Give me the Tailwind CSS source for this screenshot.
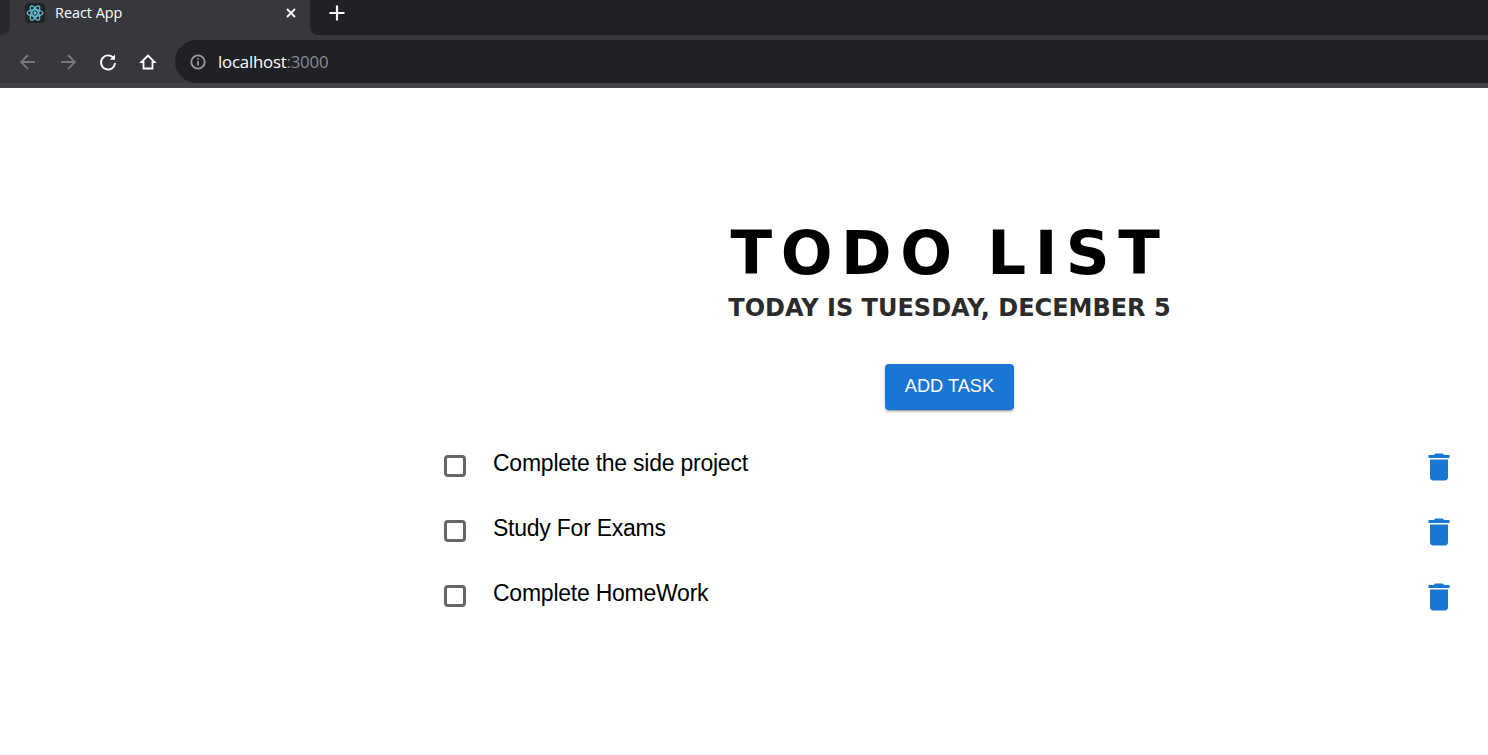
<!DOCTYPE html>
<html>
<head>
<meta charset="utf-8">
<script src="https://cdn.jsdelivr.net/npm/@tailwindcss/browser@4"></script>
</head>
<body class="bg-white h-[755px] overflow-hidden font-['Liberation_Sans',sans-serif]">
<div class="h-[88px] bg-[#37383d] flex flex-col">
  <div class="h-[35px] flex items-stretch">
    <div class="w-[10px] bg-[#28292d] rounded-br-lg"></div>
    <div class="w-[300px] flex items-center pb-[9px] pl-[15px] pr-[13px] text-white">
      <div class="w-5 h-5 bg-[#222327] rounded-sm flex items-center justify-center mr-[10px]">
        <svg viewBox="0 0 24 24" class="w-5 h-5" fill="none" stroke="#61c6df" stroke-width="1.5"><ellipse cx="12" cy="12" rx="9.5" ry="3.8"/><ellipse cx="12" cy="12" rx="9.5" ry="3.8" transform="rotate(60 12 12)"/><ellipse cx="12" cy="12" rx="9.5" ry="3.8" transform="rotate(120 12 12)"/><circle cx="12" cy="12" r="2" fill="#61c6df" stroke="none"/></svg>
      </div>
      <span class="text-[14.4px] font-['Open_Sans',sans-serif] flex-1">React App</span>
      <svg viewBox="0 0 12 12" class="w-3 h-3 -ml-px" stroke="#fff" stroke-width="1.8"><path d="M2 2l8 8M10 2l-8 8"/></svg>
    </div>
    <div class="flex-1 flex items-center pb-[9px] pl-[19px] bg-[#202124] rounded-bl-lg">
      <svg viewBox="0 0 16 16" class="w-4 h-4" stroke="#fff" stroke-width="2.200"><path d="M8 0.500v15M0.500 8h15"/></svg>
    </div>
  </div>
  <div class="h-[43px] mt-[5px] flex items-center">
    <div class="w-[175px] h-[43px] flex items-center pl-[18px] gap-[20px]">
      <svg viewBox="0 0 20 20" class="w-5 h-5" fill="none" stroke="#77787c" stroke-width="1.8"><path d="M17 10H3.500M10 3l-7 7 7 7"/></svg>
      <svg viewBox="0 0 20 20" class="w-5 h-5" fill="none" stroke="#77787c" stroke-width="1.8"><path d="M3 10h13.500M10 3l7 7-7 7"/></svg>
      <svg viewBox="0 0 20 20" class="w-5 h-5" fill="none" stroke="#fff" stroke-width="1.8"><path d="M15.800 6.500A7 7 0 1 0 17 11"/><path d="M17 2.500v5.200h-5.200z" fill="#fff" stroke="none"/></svg>
      <svg viewBox="0 0 20 20" class="w-5 h-5" fill="none" stroke="#fff" stroke-width="1.8"><path d="M3.500 10 10 3.500l6.500 6.500h-2v6.500h-9V10z"/></svg>
    </div>
    <div class="flex-1 h-[43px] bg-[#202124] rounded-l-[22px] flex items-center pl-[15px]">
      <svg viewBox="0 0 16 16" class="w-4 h-4 mr-[12px]" fill="none" stroke="#9a9b9e" stroke-width="1.8"><circle cx="8" cy="8" r="6.700"/><path d="M8 7v4.500M8 4.200v1.500"/></svg>
      <span class="text-[16.800px] font-['Open_Sans',sans-serif] text-white tracking-[-0.2px]">localhost<span class="text-[#8a8b8e]">:3000</span></span>
    </div>
  </div>
  <div class="h-[5px] bg-[#414246]"></div>
</div>
<main class="pl-[425px] pt-[129px]">
  <div class="flex flex-col items-center pr-[14px]">
    <h1 class="text-[61px] leading-[72px] font-bold font-['DejaVu_Sans',sans-serif] tracking-[8.500px] [word-spacing:-3px] text-black">TODO LIST</h1>
    <h2 class="text-[24px] leading-[30px] font-bold font-['DejaVu_Sans',sans-serif] text-[#2b2b2b] mt-[4px]">TODAY IS TUESDAY, DECEMBER 5</h2>
    <button class="mt-[41px] w-[129px] h-[46px] bg-[#1976d2] text-white rounded text-[18.2px] shadow-[0_3px_1px_-2px_rgba(0,0,0,0.2),0_2px_2px_0_rgba(0,0,0,0.14),0_1px_5px_0_rgba(0,0,0,0.12)]">ADD TASK</button>
  </div>
  <ul class="mt-[24px] flex flex-col text-[23px] text-black">
    <li class="h-[65px] flex items-start pl-[19px] pr-[31px]">
      <span class="w-[22px] h-[22px] mt-[21px] border-[3px] border-[#666] rounded-[4px] mr-[28px]"></span>
      <span class="flex-1 leading-[32px] mt-[13px] tracking-[-0.24px] -ml-px">Complete the side project</span>
      <svg viewBox="0 0 24 24" class="w-9 h-9 mt-[15px]" fill="#1976d2"><path d="M6 19c0 1.100.9 2 2 2h8c1.100 0 2-.9 2-2V7H6v12zM19 4h-3.500l-1-1h-5l-1 1H5v2h14V4z"/></svg>
    </li>
    <li class="h-[65px] flex items-start pl-[19px] pr-[31px]">
      <span class="w-[22px] h-[22px] mt-[21px] border-[3px] border-[#666] rounded-[4px] mr-[28px]"></span>
      <span class="flex-1 leading-[32px] mt-[13px] tracking-[-0.24px] -ml-px">Study For Exams</span>
      <svg viewBox="0 0 24 24" class="w-9 h-9 mt-[15px]" fill="#1976d2"><path d="M6 19c0 1.100.9 2 2 2h8c1.100 0 2-.9 2-2V7H6v12zM19 4h-3.500l-1-1h-5l-1 1H5v2h14V4z"/></svg>
    </li>
    <li class="h-[65px] flex items-start pl-[19px] pr-[31px]">
      <span class="w-[22px] h-[22px] mt-[21px] border-[3px] border-[#666] rounded-[4px] mr-[28px]"></span>
      <span class="flex-1 leading-[32px] mt-[13px] tracking-[-0.24px] -ml-px">Complete HomeWork</span>
      <svg viewBox="0 0 24 24" class="w-9 h-9 mt-[15px]" fill="#1976d2"><path d="M6 19c0 1.100.9 2 2 2h8c1.100 0 2-.9 2-2V7H6v12zM19 4h-3.500l-1-1h-5l-1 1H5v2h14V4z"/></svg>
    </li>
  </ul>
</main>
</body>
</html>
